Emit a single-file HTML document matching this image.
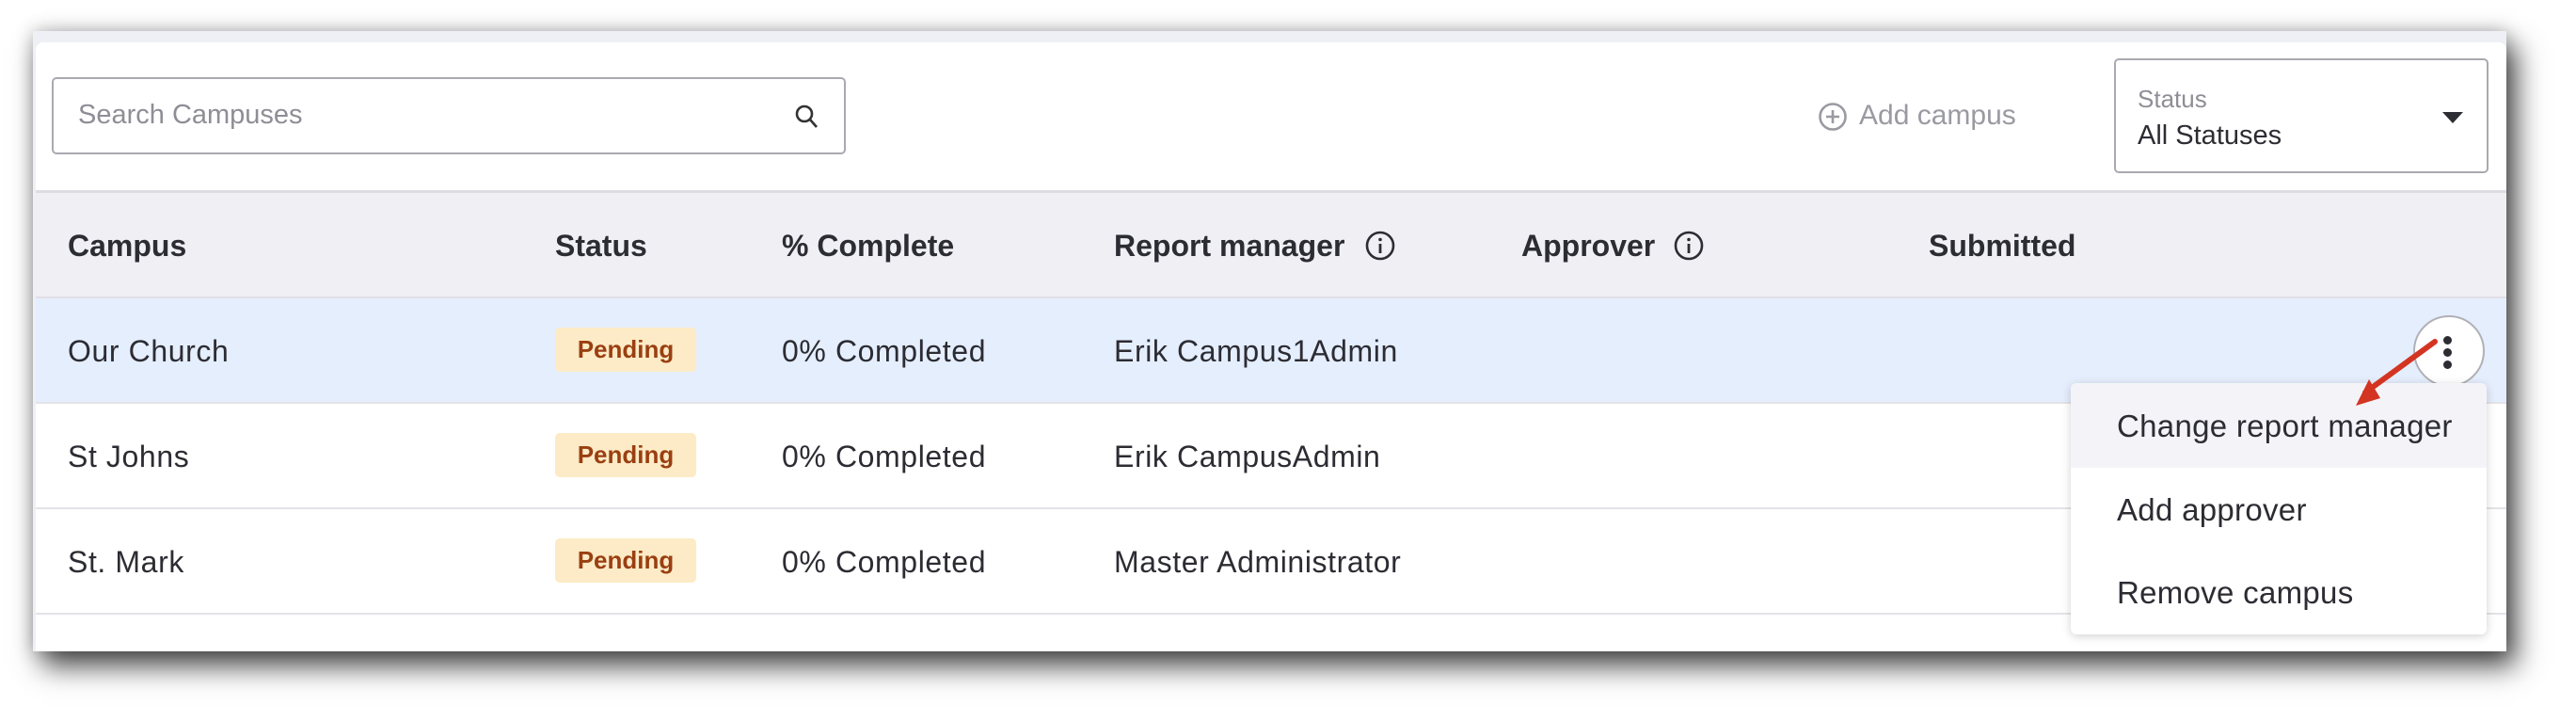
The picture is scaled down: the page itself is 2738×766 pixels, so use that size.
<!DOCTYPE html>
<html><head><meta charset="utf-8"><style>
*{margin:0;padding:0;box-sizing:border-box}
body{width:2738px;height:766px;background:#fff;position:relative;overflow:hidden;font-family:"Liberation Sans",sans-serif;color:#2c2c33}
.win{position:absolute;left:35px;top:33px;width:2629px;height:659px;background:#eef0f5;box-shadow:10px 16px 28px rgba(0,0,0,.7),0 0 18px rgba(0,0,0,.25)}
.card{position:absolute;left:3px;top:12px;width:2626px;height:647px;background:#fff;border-radius:8px 8px 0 0;overflow:hidden}
.abs{position:absolute}
.search{left:17px;top:37px;width:844px;height:82px;border:2px solid #a9a9b0;border-radius:5px}
.search span{position:absolute;left:26px;top:22px;font-size:29px;color:#8e8e96}
.hdr{left:0;top:157px;width:100%;height:115px;background:#f0eff4;border-top:3px solid #dcdce2;border-bottom:2px solid #e2dfe6}
.th{position:absolute;top:38px;font-size:32px;font-weight:bold;color:#2c2c33}
.row{left:0;width:100%;height:112px;border-bottom:2px solid #e3e3e8}
.td{position:absolute;font-size:32px;top:38px;letter-spacing:0.6px}
.pill{position:absolute;left:552px;top:31px;width:150px;height:47px;background:#fcebc6;border-radius:5px;color:#9a3f12;font-weight:bold;font-size:26px;text-align:center;line-height:47px}
.menu{left:2163px;top:362px;width:442px;height:267px;background:#fff;border-radius:6px;box-shadow:0 2px 10px rgba(0,0,0,.18)}
.mi{position:absolute;left:49px;font-size:33px;color:#2c2c33;letter-spacing:0.3px}
</style></head><body>
<div class="win"><div class="card">
<div class="abs search"><span>Search Campuses</span>
<svg class="abs" style="left:786px;top:25px" width="30" height="30" viewBox="0 0 30 30"><circle cx="12" cy="12" r="8" fill="none" stroke="#333" stroke-width="2.6"/><line x1="18" y1="18" x2="25" y2="26" stroke="#333" stroke-width="2.6"/></svg></div>
<svg class="abs" style="left:1894px;top:63px" width="32" height="32" viewBox="0 0 32 32"><circle cx="16" cy="16" r="13.5" fill="none" stroke="#9a9aa2" stroke-width="2.6"/><path d="M16 9v14M9 16h14" stroke="#9a9aa2" stroke-width="2.6"/></svg>
<div class="abs" style="left:1938px;top:61px;font-size:30px;color:#9a9aa2">Add campus</div>
<div class="abs" style="left:2209px;top:17px;width:398px;height:122px;border:2px solid #a9a9b0;border-radius:5px">
<div class="abs" style="left:23px;top:26px;font-size:26px;color:#8e8e96">Status</div>
<div class="abs" style="left:23px;top:64px;font-size:29px;color:#2c2c33">All Statuses</div>
<svg class="abs" style="left:346px;top:54px" width="24" height="14" viewBox="0 0 24 14"><path d="M1 1h22L12 13z" fill="#2c2c33"/></svg></div>
<div class="abs hdr">
<div class="th" style="left:34px">Campus</div>
<div class="th" style="left:552px">Status</div>
<div class="th" style="left:793px">% Complete</div>
<div class="th" style="left:1146px">Report manager</div>
<svg class="abs" style="left:1412px;top:39px" width="34" height="34" viewBox="0 0 34 34"><circle cx="17" cy="17" r="14" fill="none" stroke="#2c2c33" stroke-width="2.6"/><circle cx="17" cy="10.5" r="1.8" fill="#2c2c33"/><path d="M17 15v10" stroke="#2c2c33" stroke-width="2.8"/></svg>
<div class="th" style="left:1579px">Approver</div>
<svg class="abs" style="left:1740px;top:39px" width="34" height="34" viewBox="0 0 34 34"><circle cx="17" cy="17" r="14" fill="none" stroke="#2c2c33" stroke-width="2.6"/><circle cx="17" cy="10.5" r="1.8" fill="#2c2c33"/><path d="M17 15v10" stroke="#2c2c33" stroke-width="2.8"/></svg>
<div class="th" style="left:2012px">Submitted</div></div>
<div class="abs row" style="top:272px;background:#e5eefd">
<div class="td" style="left:34px">Our Church</div><div class="pill">Pending</div><div class="td" style="left:793px">0% Completed</div><div class="td" style="left:1146px">Erik Campus1Admin</div></div>
<div class="abs row" style="top:384px">
<div class="td" style="left:34px">St Johns</div><div class="pill">Pending</div><div class="td" style="left:793px">0% Completed</div><div class="td" style="left:1146px">Erik CampusAdmin</div></div>
<div class="abs row" style="top:496px">
<div class="td" style="left:34px">St. Mark</div><div class="pill">Pending</div><div class="td" style="left:793px">0% Completed</div><div class="td" style="left:1146px">Master Administrator</div></div>
<div class="abs" style="left:2527px;top:290px;width:76px;height:76px;border-radius:50%;background:#fff;border:2px solid #b0b0b6"></div>
<div class="abs" style="left:2559px;top:312px;width:9px;height:9px;border-radius:50%;background:#2c2c33;box-shadow:0 13px 0 #2c2c33,0 26px 0 #2c2c33"></div>
<div class="abs menu">
<div class="abs" style="left:0;top:0;width:100%;height:90px;background:#f4f4f8;border-radius:6px 6px 0 0"></div>
<div class="mi" style="top:27px">Change report manager</div>
<div class="mi" style="top:116px">Add approver</div>
<div class="mi" style="top:204px">Remove campus</div></div>
<svg class="abs" style="left:2440px;top:310px" width="120" height="80" viewBox="0 0 120 80"><path d="M110 8L36 62" stroke="#d33522" stroke-width="6" stroke-linecap="round"/><path d="M26 76L40 48L52 68z" fill="#d33522"/></svg>
</div></div>
</body></html>
